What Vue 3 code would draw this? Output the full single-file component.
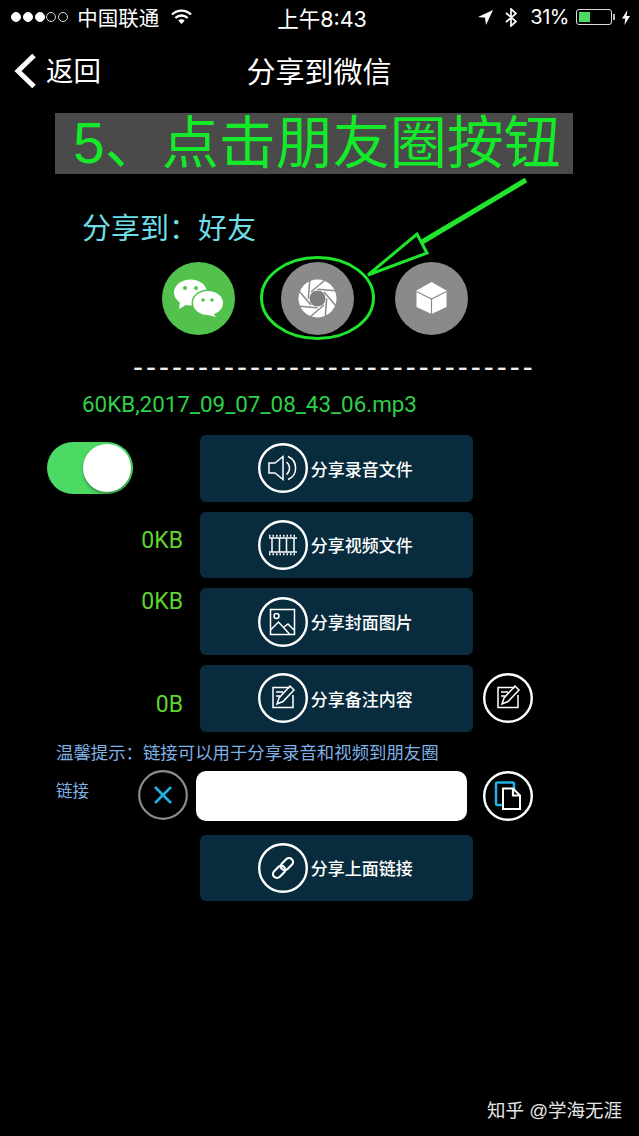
<script setup>
const blades = [0, 45, 90, 135, 180, 225, 270, 315];
const shareLabel = "分享到\uFF1A好友";
const hintText = "温馨提示\uFF1A链接可以用于分享录音和视频到朋友圈";
</script>

<template>
  <div class="page">
    <div class="status">
      <div class="status-left">
        <span class="dots"><i class="on"></i><i class="on"></i><i class="on"></i><i></i><i></i></span>
        <span class="carrier">中国联通</span>
        <svg class="wifi" width="21" height="16" viewBox="0 0 21 16">
          <path d="M1 5.500a13.500 13.500 0 0 1 19 0M4.300 9a9 9 0 0 1 12.400 0" fill="none" stroke="#fff" stroke-width="2.400" />
          <path d="M7.300 11.600a4.600 4.600 0 0 1 6.400 0L10.500 15z" fill="#fff" />
        </svg>
      </div>
      <div class="time">上午8:43</div>
      <div class="status-right">
        <svg width="15" height="15" viewBox="0 0 15 15"><path d="M15 0L0 7l7 .8L8 15z" fill="#fff" /></svg>
        <svg class="bt" width="12" height="19" viewBox="0 0 12 19"><path d="M1 5l10 8.500L6 18V1l5 4.500L1 14" fill="none" stroke="#fff" stroke-width="1.700" /></svg>
        <span class="pct">31%</span>
        <span class="battery"><i></i></span>
        <svg class="bolt" width="8" height="15" viewBox="0 0 8 15"><path d="M5.500 0L0 8.500h3.200L2.500 15 8 6H4.500z" fill="#fff" /></svg>
      </div>
    </div>

    <div class="nav">
      <div class="back">
        <svg width="24" height="36" viewBox="0 0 24 36"><path d="M21 2.500L5 18l16 15.500" fill="none" stroke="#fff" stroke-width="5" /></svg>
        <span>返回</span>
      </div>
      <div class="title">分享到微信</div>
    </div>

    <div class="banner">5、点击朋友圈按钮</div>

    <div class="share-to">{{ shareLabel }}</div>

    <div class="share-icons">
      <svg class="round" width="73" height="73" viewBox="0 0 73 73">
        <circle cx="36.500" cy="36.500" r="36.500" fill="#52c24c" />
        <ellipse cx="28.500" cy="30.500" rx="16.500" ry="13" fill="#fff" />
        <path d="M18 40l-1 7 7-4z" fill="#fff" />
        <ellipse cx="46" cy="41" rx="16.500" ry="13.500" fill="#52c24c" />
        <ellipse cx="46" cy="41" rx="15" ry="12" fill="#fff" />
        <path d="M50 50l4 5-8-2z" fill="#fff" />
        <circle cx="23" cy="26" r="2" fill="#52c24c" />
        <circle cx="34" cy="26" r="2" fill="#52c24c" />
        <circle cx="41" cy="38" r="1.800" fill="#52c24c" />
        <circle cx="50" cy="38" r="1.800" fill="#52c24c" />
      </svg>
      <svg class="round" width="73" height="73" viewBox="0 0 73 73">
        <circle cx="36.500" cy="36.500" r="36.500" fill="#8a8a8a" />
        <circle cx="36.500" cy="36.500" r="19" fill="#fff" />
        <g v-for="b in blades" :key="b" :transform="`rotate(${b} 36.500 36.500)`">
          <path d="M30 30L44 18" stroke="#8a8a8a" stroke-width="1.500" />
        </g>
        <circle cx="36.500" cy="36.500" r="8" fill="#808080" />
      </svg>
      <svg class="round cube" width="73" height="73" viewBox="0 0 73 73">
        <circle cx="36.500" cy="36.500" r="36.500" fill="#8a8a8a" />
        <path d="M36.500 20L51.500 28.500V45L36.500 52L21.500 45V28.500z" fill="#fff" />
        <path d="M21.500 29.500L36.500 37L51.500 29.500M36.500 37V52" fill="none" stroke="#8a8a8a" stroke-width="1.200" />
      </svg>
    </div>

    <div class="dashes">-------------------------------</div>
    <div class="filename">60KB,2017_09_07_08_43_06.mp3</div>

    <div class="rows">
      <div class="left">
        <div class="toggle"><i></i></div>
      </div>
      <div class="btn">
        <svg class="icon" width="50" height="50" viewBox="0 0 50 50">
          <circle class="ring" cx="25" cy="25" r="23.800" />
          <path d="M11 20h6l8-6.500v23L17 30h-6z" />
          <path d="M28.500 19a8 8 0 0 1 0 12.500M30 13.500a12.500 12.500 0 0 1 0 23" />
        </svg>
        <span>分享录音文件</span>
      </div>
      <div></div>

      <div class="left"><span class="size s1">0KB</span></div>
      <div class="btn">
        <svg class="icon" width="50" height="50" viewBox="0 0 50 50">
          <circle class="ring" cx="25" cy="25" r="23.800" />
          <path d="M11 18h28M11 32h28M14 18v14M21.500 18v14M28.500 18v14M36 18v14" />
          <path class="dots-line" d="M11 15.700h28M11 34.300h28" />
        </svg>
        <span>分享视频文件</span>
      </div>
      <div></div>

      <div class="left"><span class="size s2">0KB</span></div>
      <div class="btn">
        <svg class="icon" width="50" height="50" viewBox="0 0 50 50">
          <circle class="ring" cx="25" cy="25" r="23.800" />
          <rect x="12.500" y="12.500" width="24" height="25" />
          <circle cx="18.500" cy="19" r="2.500" />
          <path d="M12.500 33l8-8 11 12M26 30l4-3 6.500 6.500" />
        </svg>
        <span>分享封面图片</span>
      </div>
      <div></div>

      <div class="left"><span class="size s3">0B</span></div>
      <div class="btn">
        <svg class="icon" width="50" height="50" viewBox="0 0 50 50">
          <circle class="ring" cx="25" cy="25" r="23.800" />
          <path d="M32 14.500H15v20h20V22M18 19h7M18 23h4" />
          <path d="M19 31l2-6 11-12 4 4-11 11.500z" />
        </svg>
        <span>分享备注内容</span>
      </div>
      <svg class="icon side" width="50" height="50" viewBox="0 0 50 50">
        <circle class="ring" cx="25" cy="25" r="23.800" />
        <path d="M32 14.500H15v20h20V22M18 19h7M18 23h4" />
        <path d="M19 31l2-6 11-12 4 4-11 11.500z" />
      </svg>
    </div>

    <div class="hint">{{ hintText }}</div>

    <div class="link-row">
      <span class="link-label">链接</span>
      <svg class="clear" width="50" height="50" viewBox="0 0 50 50">
        <circle cx="25" cy="25" r="23.800" fill="none" stroke="#8f8b87" stroke-width="2.200" />
        <path d="M17 17l16 16M33 17L17 33" stroke="#1fb0e6" stroke-width="2.600" />
      </svg>
      <div class="input"></div>
      <svg class="icon copy" width="50" height="50" viewBox="0 0 50 50">
        <circle class="ring" cx="25" cy="25" r="23.800" />
        <rect class="cyan" x="13" y="11.500" width="18" height="22.500" rx="1.500" />
        <path class="page-sheet" d="M20 17.500h10l7 7V38H20z" />
        <path class="thick" d="M30 17.500v7h7" />
      </svg>
    </div>

    <div class="btn link-btn">
      <svg class="icon" width="50" height="50" viewBox="0 0 50 50">
        <circle class="ring" cx="25" cy="25" r="23.800" />
        <g transform="rotate(-45 25 25)">
          <rect class="thick" x="12.500" y="21" width="14" height="8" rx="4" />
          <rect class="thick" x="23.500" y="21" width="14" height="8" rx="4" />
        </g>
      </svg>
      <span>分享上面链接</span>
    </div>

    <div class="watermark">知乎 @学海无涯</div>

    <svg class="marks" width="639" height="1136" viewBox="0 0 639 1136">
      <ellipse cx="317.500" cy="298" rx="56" ry="40.500" />
      <path d="M368 275L417 234L427 253z" />
      <path class="shaft" d="M526 180L422 242" />
    </svg>
  </div>
</template>

<style>
html,
body {
  background: #000;
}
</style>

<style scoped>
.page {
  position: relative;
  width: 639px;
  height: 1136px;
  overflow: hidden;
  background: #000;
  font-family: "Liberation Sans", "Noto Sans CJK SC", sans-serif;
  color: #fff;
}

.status {
  display: grid;
  grid-template-columns: 1fr auto 1fr;
  align-items: center;
  height: 34px;
  padding: 0 9px 0 11px;
  font-size: 20px;
  box-sizing: border-box;
}
.status-left {
  display: flex;
  align-items: center;
}
.dots {
  display: flex;
  gap: 1.800px;
  margin-right: 9px;
}
.dots i {
  width: 10px;
  height: 10px;
  box-sizing: border-box;
  border-radius: 50%;
  border: 1px solid #ddd;
}
.dots i.on {
  background: #fff;
  border-color: #fff;
}
.carrier {
  font-size: 20.500px;
}
.wifi {
  margin-left: 12px;
}
.time {
  margin-left: 3px;
  font-family: Inter, "Noto Sans CJK SC", sans-serif;
  font-size: 21.500px;
}
.status-right {
  display: flex;
  align-items: center;
  justify-content: flex-end;
}
.bt {
  margin-left: 12px;
}
.pct {
  margin-left: 13px;
  font-family: Inter, sans-serif;
  font-size: 20px;
  letter-spacing: -0.500px;
}
.battery {
  position: relative;
  display: flex;
  width: 36px;
  height: 16px;
  margin-left: 7px;
  margin-right: 3px;
  padding: 2px;
  box-sizing: border-box;
  border: 1px solid #ddd;
  border-radius: 3px;
}
.battery::after {
  content: "";
  position: absolute;
  right: -4px;
  top: 4px;
  width: 2px;
  height: 6px;
  background: #bbb;
}
.battery i {
  width: 11px;
  background: #4cd964;
}
.bolt {
  margin-left: 7px;
}

.nav {
  position: relative;
  display: flex;
  align-items: center;
  justify-content: center;
  height: 74px;
}
.back {
  position: absolute;
  left: 13px;
  top: 19px;
  display: flex;
  align-items: center;
  gap: 9px;
  font-size: 27.500px;
}
.back svg {
  display: block;
}
.back span {
  margin-top: -5px;
}
.title {
  margin-top: -2px;
  margin-left: -1px;
  font-size: 29px;
}

.banner {
  width: 518px;
  height: 61px;
  margin: 5px 0 0 55px;
  background: #4a4a4a;
  color: #14ea2a;
  font-size: 57px;
  line-height: 61px;
  white-space: nowrap;
  padding-left: 18px;
  box-sizing: border-box;
}

.share-to {
  height: 40px;
  margin: 35px 0 0 82px;
  color: #6fdde6;
  font-size: 29px;
  line-height: 40px;
}

.share-icons {
  display: flex;
  gap: 46px;
  margin: 13px 0 0 162px;
}
.share-icons .cube {
  margin-left: -5px;
}

.dashes {
  height: 30px;
  margin: 17px 0 0 133px;
  color: #eee;
  font-size: 30px;
  line-height: 30px;
  letter-spacing: 3px;
  white-space: nowrap;
}

.filename {
  height: 30px;
  margin: 7px 0 0 82px;
  color: #2ed14a;
  font-family: Roboto, sans-serif;
  font-size: 22.400px;
  line-height: 30px;
}

.rows {
  display: grid;
  grid-template-columns: 200px 272.500px auto;
  grid-auto-rows: 66.670px;
  row-gap: 10px;
  align-items: center;
  margin-top: 16px;
}
.left {
  display: flex;
  align-items: center;
  justify-content: flex-end;
  padding-right: 17px;
}
.toggle {
  display: flex;
  justify-content: flex-end;
  align-items: center;
  width: 86px;
  height: 52px;
  margin-right: 50px;
  padding-right: 2px;
  box-sizing: border-box;
  border-radius: 26px;
  background: #4cd964;
}
.toggle i {
  width: 48px;
  height: 48px;
  border-radius: 50%;
  background: #fff;
  box-shadow: 0 2px 3px rgba(0, 0, 0, 0.35);
}
.size {
  color: #5fd32f;
  font-family: Roboto, sans-serif;
  font-size: 23px;
}
.s1 {
  margin-bottom: 9px;
}
.s2 {
  margin-bottom: 40px;
}
.s3 {
  margin-top: 12px;
}

.btn {
  display: flex;
  align-items: center;
  justify-content: center;
  gap: 3px;
  height: 66.670px;
  border-radius: 6px;
  background: #082c3d;
  font-size: 17px;
  font-weight: 500;
}
.icon {
  flex: none;
  display: block;
  margin-left: -2px;
  fill: none;
  stroke: #fff;
  stroke-width: 1.500;
}
.icon .ring {
  stroke-width: 2.400;
}
.icon .dots-line {
  stroke-width: 2;
  stroke-dasharray: 1.500 2;
}
.icon .page-sheet {
  fill: #000;
  stroke-width: 2;
}
.icon .cyan {
  stroke: #1fb0e6;
  stroke-width: 2.500;
}
.icon .thick {
  stroke-width: 2.200;
}
.side {
  margin-left: 10px;
}

.hint {
  height: 24px;
  margin: 9px 0 0 56px;
  color: #7fb0e6;
  font-size: 17.400px;
  line-height: 24px;
  white-space: nowrap;
}

.link-row {
  display: flex;
  align-items: flex-start;
  margin: 6px 0 0 56px;
}
.link-label {
  width: 82px;
  color: #7fb0e6;
  font-size: 16.500px;
  line-height: 24px;
  margin-top: 8px;
}
.clear {
  display: block;
  margin-top: -1px;
  margin-right: 8px;
}
.input {
  width: 271px;
  height: 50px;
  border-radius: 10px;
  background: #fff;
}
.copy {
  margin-left: 16px;
}

.link-btn {
  width: 272.500px;
  margin: 14px 0 0 200px;
}

.watermark {
  position: absolute;
  right: 17px;
  bottom: 14px;
  color: #e6e6e6;
  font-size: 18.500px;
}

.marks {
  position: absolute;
  left: 0;
  top: 0;
  fill: none;
  stroke: #1fe62c;
  stroke-width: 3;
  pointer-events: none;
}
.marks .shaft {
  stroke-width: 5;
}
</style>
